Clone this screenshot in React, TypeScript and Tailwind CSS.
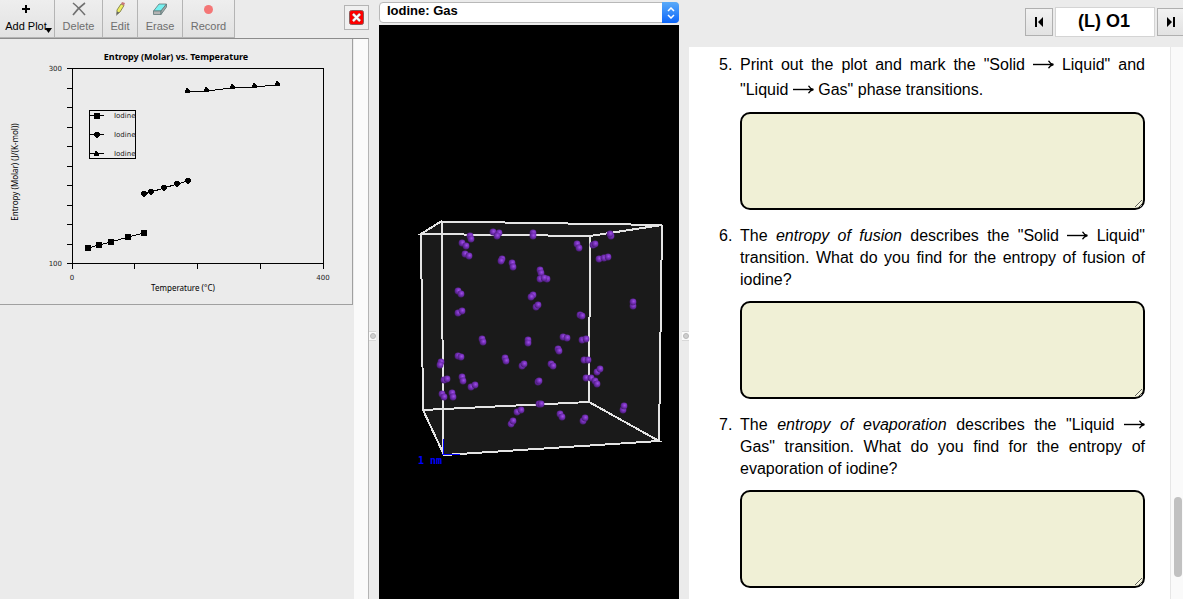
import type { ReactNode } from "react";

type Point = [number, number];

const solid: Point[] = [[88, 248], [99, 245], [111, 242], [128, 237], [144, 233]];
const liquid: Point[] = [[144, 194], [151, 192], [164, 188], [177, 184], [188, 181]];
const gas: Point[] = [[187, 91], [206, 90], [232, 87], [254, 86], [277, 84]];

const yTicks = [68, 88, 107, 127, 146, 166, 185, 205, 224, 244, 263];
const xTicks = [72, 134, 197, 260, 323];

// every molecule is a short run of atoms
const molecules: Point[][] = [
  [[470, 236], [471, 239]],
  [[462, 243], [466, 246]],
  [[465, 254], [469, 256]],
  [[493, 232], [499, 233], [497, 236]],
  [[533, 233], [533, 236]],
  [[502, 259], [501, 261]],
  [[512, 263], [513, 267]],
  [[540, 270], [541, 273]],
  [[540, 279], [547, 279], [544, 278]],
  [[458, 291], [461, 294]],
  [[458, 313], [462, 311]],
  [[533, 295], [531, 297]],
  [[536, 307], [538, 305]],
  [[577, 244], [579, 248]],
  [[593, 245], [595, 244]],
  [[611, 236], [610, 234]],
  [[599, 259], [604, 258], [608, 257]],
  [[633, 306], [633, 302]],
  [[580, 315], [582, 316]],
  [[563, 337], [567, 338]],
  [[582, 340], [586, 339]],
  [[482, 339], [483, 342]],
  [[528, 340], [528, 343]],
  [[458, 356], [461, 357]],
  [[441, 362], [440, 365]],
  [[505, 358], [506, 361]],
  [[522, 366], [524, 364]],
  [[444, 380], [447, 379]],
  [[462, 377], [463, 381]],
  [[471, 387], [475, 385]],
  [[538, 382], [539, 381]],
  [[442, 394], [444, 397]],
  [[452, 393], [453, 397]],
  [[539, 404], [541, 404]],
  [[517, 412], [521, 410]],
  [[511, 424], [513, 421]],
  [[558, 349], [559, 351]],
  [[551, 364], [553, 366]],
  [[584, 360], [588, 360]],
  [[597, 372], [600, 369]],
  [[586, 378], [591, 378]],
  [[595, 381], [597, 384]],
  [[623, 410], [624, 406]],
  [[560, 414], [562, 417]],
  [[583, 421], [585, 418]],
];

function Square({ x, y }: { x: number; y: number }) {
  return <rect x={x - 3} y={y - 3} width="6" height="6" />;
}

function Dot({ x, y }: { x: number; y: number }) {
  return <path d={`M${x - 3} ${y - 2}h1v-1h4v1h1v3h-1v1h-1v1h-2v-1h-1v-1h-1z`} />;
}

function Triangle({ x, y }: { x: number; y: number }) {
  return <path d={`M${x - 1} ${y - 3}h2v1h1v1h1v3h-5v-3h1z`} />;
}

function Line({ points }: { points: Point[] }) {
  return <polyline points={points.map((p) => p.join(",")).join(" ")} fill="none" stroke="black" />;
}

function Plot() {
  return (
    <svg viewBox="0 39 352 265" className="block w-[352px] font-['Noto_Sans',sans-serif]" role="img" aria-label="Entropy vs. temperature plot">
      <g shapeRendering="crispEdges">
        <rect x="72.5" y="68.5" width="251" height="195" fill="none" stroke="black" />
        {yTicks.map((y) => (
          <rect key={y} x="67" y={y} width="5" height="1" />
        ))}
        {xTicks.map((x) => (
          <rect key={x} x={x} y="263" width="1" height="6" />
        ))}
        <Line points={solid} />
        <Line points={liquid} />
        <Line points={gas.map(([x, y]): Point => [x, y + 1])} />
        {solid.map(([x, y]) => <Square key={x} x={x} y={y} />)}
        {liquid.map(([x, y]) => <Dot key={x} x={x} y={y} />)}
        {gas.map(([x, y]) => <Triangle key={x} x={x} y={y} />)}

        <rect x="89.5" y="110.5" width="46" height="48" fill="none" stroke="black" />
        {[115, 134, 153].map((y) => (
          <rect key={y} x="90" y={y} width="14" height="1" />
        ))}
        <Square x={97} y={116} />
        <Dot x={97} y={135} />
        <Triangle x={96} y={154} />
      </g>

      <g className="font-['DejaVu_Sans',sans-serif] text-[7px]" fill="#222">
        {[118, 137, 156].map((y) => (
          <text key={y} x="114" y={y}>Iodine</text>
        ))}
        <text x="62" y="71" textAnchor="end">300</text>
        <text x="62" y="266" textAnchor="end">100</text>
        <text x="72" y="280" textAnchor="middle">0</text>
        <text x="323" y="280" textAnchor="middle">400</text>
      </g>
      <text x="176" y="60" textAnchor="middle" className="text-[9px] font-bold">Entropy (Molar) vs. Temperature</text>
      <text x="183" y="291" textAnchor="middle" className="text-[8px]">Temperature (°C)</text>
      <text transform="translate(18 172) rotate(-90)" textAnchor="middle" className="text-[8px]">Entropy (Molar) (J/(K-mol))</text>
    </svg>
  );
}

function SimulationBox() {
  return (
    <svg viewBox="379 25 300 574" className="block w-[300px]" role="img" aria-label="Iodine gas simulation">
      <defs>
        <radialGradient id="atom" cx="0.6" cy="0.4" r="0.6">
          <stop offset="0" stopColor="#a050e8" />
          <stop offset="0.5" stopColor="#7530b8" />
          <stop offset="1" stopColor="#4a1c78" />
        </radialGradient>
      </defs>
      <polygon points="421,234 441,221 662,225 659,441 444,455 423,410" fill="#1a1a1a" />
      <g stroke="#e4e4e4" strokeWidth="2" fill="none" shapeRendering="crispEdges">
        <path d="M421 234L441 221.500L662 225L590 236Z" />
        <path d="M423 410L589 402L659 441L444 455Z" />
        <path d="M421 234L423 410M441.500 221.500L443.500 454M590 236L589 402M662 225L659 441" />
      </g>
      {molecules.map((atoms, i) => (
        <g key={i} fill="url(#atom)">
          {atoms.map(([x, y]) => (
            <circle key={`${x}-${y}`} cx={x} cy={y} r="3.400" />
          ))}
        </g>
      ))}
      <path d="M443.500 439V455M442 454.500H460" stroke="#0000ff" shapeRendering="crispEdges" />
      <text x="418" y="464" fill="#0000ff" className="font-['DejaVu_Sans_Mono',monospace] text-[10px] font-bold">1 nm</text>
    </svg>
  );
}

function ToolButton({ label, icon, className }: { label: string; icon: ReactNode; className: string }) {
  return (
    <button className={`flex h-full flex-col items-center border-r border-b border-[#b4b4b4] bg-linear-to-b from-[#eeeeee] to-[#e2e2e2] text-[11px] leading-4 ${className}`}>
      <span className="flex h-[18px] items-center">{icon}</span>
      <span>{label}</span>
    </button>
  );
}

function Toolbar() {
  return (
    <div className="flex h-[38px]">
      <ToolButton
        label="Add Plot"
        className="relative w-[55px] pr-0.5 text-black"
        icon={
          <>
            <svg width="8" height="8" viewBox="0 0 8 8" shapeRendering="crispEdges"><path d="M0 3h8v2H0zM3 0h2v8H3z" /></svg>
            <svg width="7" height="5" viewBox="0 0 7 5" className="absolute right-0.5 bottom-1"><path d="M0 0h7L3.500 5z" /></svg>
          </>
        }
      />
      <ToolButton
        label="Delete"
        className="w-12 text-[#6e6e6e]"
        icon={<svg width="14" height="14" viewBox="0 0 14 14" fill="none" stroke="#707070" strokeWidth="1.600"><path d="M1 1Q6 5 13 13M13 1Q6 6 1 13" /></svg>}
      />
      <ToolButton
        label="Edit"
        className="w-[35px] text-[#6e6e6e]"
        icon={
          <svg width="12" height="14" viewBox="0 0 12 14">
            <path d="M3 8L7 2L10 3.500L6 10L3 12Z" fill="#eeee60" stroke="#8a8a50" />
            <path d="M7 2L8 0L11 1L10 3.500Z" fill="#c77878" />
            <path d="M3 9.500L5.500 10.500L2 14Z" fill="#666" />
          </svg>
        }
      />
      <ToolButton
        label="Erase"
        className="w-[45px] text-[#6e6e6e]"
        icon={
          <svg width="14" height="12" viewBox="0 0 14 12" stroke="#607878" strokeWidth="0.800" strokeLinejoin="round">
            <path d="M6 1H13.500L8 8H0.500Z" fill="#76f0f0" />
            <path d="M0.500 8H8V11.500H0.500Z" fill="#b4b4b4" />
            <path d="M8 8L13.500 1V4L8 11.500Z" fill="#a2a8a8" />
          </svg>
        }
      />
      <ToolButton
        label="Record"
        className="w-[52px] text-[#6e6e6e]"
        icon={<span className="size-[9px] rounded-full bg-[#f47676]" />}
      />
      <button aria-label="Close" className="mt-[5px] ml-auto flex size-[25px] items-center justify-center border border-[#b4b4b4] bg-[#f0f0f0]">
        <svg width="15" height="15" viewBox="0 0 15 15">
          <rect x="0.500" y="0.500" width="14" height="14" rx="2" fill="#ff0000" stroke="#8a5a5a" />
          <path d="M4 4L11 11M11 4L4 11" stroke="#999" strokeWidth="3" />
          <path d="M4 4L11 11M11 4L4 11" stroke="#fff" strokeWidth="1.800" />
        </svg>
      </button>
    </div>
  );
}

function Splitter({ className }: { className: string }) {
  return (
    <div className={`flex w-2.5 shrink-0 pt-[331px] ${className}`}>
      <div className="flex h-2.5 w-[7px] items-center justify-center border-y border-[#d8d8d8] bg-[#fafafa]">
        <span className="size-1.5 rounded-full border border-[#b8b8b8] bg-[#cfcfcf]" />
      </div>
    </div>
  );
}

function Arrow() {
  return (
    <svg width="21" height="10" viewBox="0 0 21 10" className="inline-block align-baseline" role="img" aria-label="to" fill="none" stroke="black" strokeWidth="1.400">
      <path d="M0 4.500H19.500" />
      <path d="M15.500 0.800Q17 3.800 20.500 4.500Q17 5.200 15.500 8.200" />
    </svg>
  );
}

function Question({ number, leading = "leading-[22px]", children }: { number: number; leading?: string; children: ReactNode }) {
  const id = `question-${number}`;
  return (
    <li className="flex">
      <span className={`w-[21px] shrink-0 ${leading}`}>{number}.</span>
      <div className="min-w-0 flex-1">
        <label htmlFor={id} className={`block text-justify ${leading}`}>{children}</label>
        <textarea id={id} className="mt-2.5 block h-[98px] w-full resize rounded-[10px] border-2 border-black bg-[#f0f0d6] p-2" />
      </div>
    </li>
  );
}

export default function App() {
  return (
    <div className="flex h-screen overflow-hidden bg-[#ebebeb] font-['Liberation_Sans',Arial,sans-serif] text-black">
      <section className="flex w-[369px] shrink-0 flex-col">
        <Toolbar />
        <div className="flex min-h-0 flex-1 border-t border-r border-t-[#8c8c8c] border-r-[#b4b4b4]">
          <div className="flex-1">
            <div className="w-[353px] border-r border-b border-[#a0a0a0]">
              <Plot />
            </div>
          </div>
          <div className="w-3.5 bg-[#fafafa]" />
        </div>
      </section>

      <Splitter className="justify-start" />

      <section className="flex w-[300px] shrink-0 flex-col">
        <div className="relative mt-0.5 mb-0.5 h-[21px]">
          <select aria-label="Simulation" className="block h-full w-full appearance-none rounded border border-[#b8b8b8] bg-white pb-1 pl-[7px] text-[13px] leading-[15px] font-bold">
            <option>Iodine: Gas</option>
          </select>
          <span className="pointer-events-none absolute inset-y-0 right-0 flex w-[17px] items-center justify-center rounded-r bg-linear-to-b from-[#5aaaf8] to-[#0a64fa]">
            <svg width="8" height="12" viewBox="0 0 8 12" fill="none" stroke="white" strokeWidth="1.500"><path d="M1 4L4 1L7 4M1 8L4 11L7 8" /></svg>
          </span>
        </div>
        <div className="min-h-0 flex-1 overflow-hidden bg-black">
          <SimulationBox />
        </div>
      </section>

      <Splitter className="justify-end" />

      <section className="flex min-w-0 flex-1 flex-col">
        <header className="flex h-[47px] items-start justify-end gap-0.5 pt-[7px]">
          <button aria-label="Previous page" className="mt-px flex size-7 items-center justify-center border border-[#b0b0b0] bg-linear-to-b from-[#f2f2f2] to-[#e2e2e2]">
            <svg width="9" height="10" viewBox="0 0 9 10"><path d="M0 0h2v10H0zM8 0v10L3 5z" /></svg>
          </button>
          <h1 className="flex h-[30px] w-[100px] items-center justify-center border border-[#d4d4d4] bg-white pr-0.5 pb-0.5 text-lg font-bold">(L) O1</h1>
          <button aria-label="Next page" className="mt-px flex h-7 w-[26px] items-center justify-center border border-r-0 border-[#b0b0b0] bg-linear-to-b from-[#f2f2f2] to-[#e2e2e2]">
            <svg width="9" height="10" viewBox="0 0 9 10"><path d="M7 0h2v10H7zM1 0v10L6 5z" /></svg>
          </button>
        </header>

        <main className="flex min-h-0 flex-1 bg-white">
          <ol className="flex flex-1 flex-col gap-[15px] overflow-hidden pt-[5px] pr-[25px] pl-[30px] text-base">
            <Question number={5} leading="leading-[25px]">
              Print out the plot and mark the "Solid <Arrow /> Liquid" and "Liquid <Arrow /> Gas" phase transitions.
            </Question>
            <Question number={6}>
              The <em>entropy of fusion</em> describes the "Solid <Arrow /> Liquid" transition. What do you find for the entropy of fusion of iodine?
            </Question>
            <Question number={7}>
              The <em>entropy of evaporation</em> describes the "Liquid <Arrow /> Gas" transition. What do you find for the entropy of evaporation of iodine?
            </Question>
          </ol>
          <div className="flex w-[13px] justify-end border-l border-[#e6e6e6] bg-[#fafafa] pt-[450px]">
            <div className="mr-px h-20 w-2 rounded-full bg-[#c1c1c1]" />
          </div>
        </main>
      </section>
    </div>
  );
}
